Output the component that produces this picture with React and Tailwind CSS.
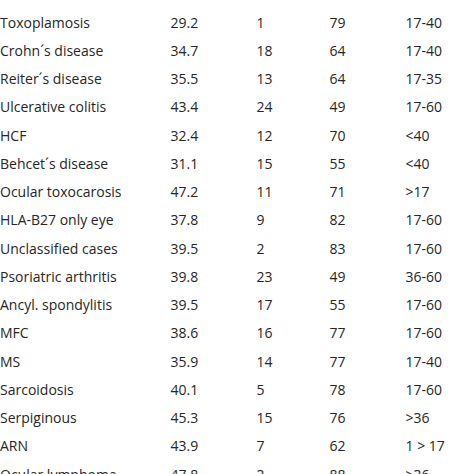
export default function App() {
  const rows = [
    ["Toxoplamosis", "29.2", "1", "79", "17-40"],
    ["Crohn´s disease", "34.7", "18", "64", "17-40"],
    ["Reiter´s disease", "35.5", "13", "64", "17-35"],
    ["Ulcerative colitis", "43.4", "24", "49", "17-60"],
    ["HCF", "32.4", "12", "70", "<40"],
    ["Behcet´s disease", "31.1", "15", "55", "<40"],
    ["Ocular toxocarosis", "47.2", "11", "71", ">17"],
    ["HLA-B27 only eye", "37.8", "9", "82", "17-60"],
    ["Unclassified cases", "39.5", "2", "83", "17-60"],
    ["Psoriatric arthritis", "39.8", "23", "49", "36-60"],
    ["Ancyl. spondylitis", "39.5", "17", "55", "17-60"],
    ["MFC", "38.6", "16", "77", "17-60"],
    ["MS", "35.9", "14", "77", "17-40"],
    ["Sarcoidosis", "40.1", "5", "78", "17-60"],
    ["Serpiginous", "45.3", "15", "76", ">36"],
    ["ARN", "43.9", "7", "62", "1 > 17"],
    ["Ocular lymphoma", "47.8", "3", "88", ">36"],
  ];
  return (
    <div
      className="w-[474px] h-[474px] overflow-hidden bg-white text-[#262626] text-[14px] pt-[8.5px]"
      style={{ fontFamily: '"Open Sans", sans-serif' }}
    >
      {rows.map((r, i) => (
        <div key={i} className="grid grid-cols-[170.5px_86px_73px_76px_1fr] h-[28.25px] leading-[28.25px] whitespace-nowrap">
          {r.map((c, j) => (
            <div key={j}>{c}</div>
          ))}
        </div>
      ))}
    </div>
  );
}
